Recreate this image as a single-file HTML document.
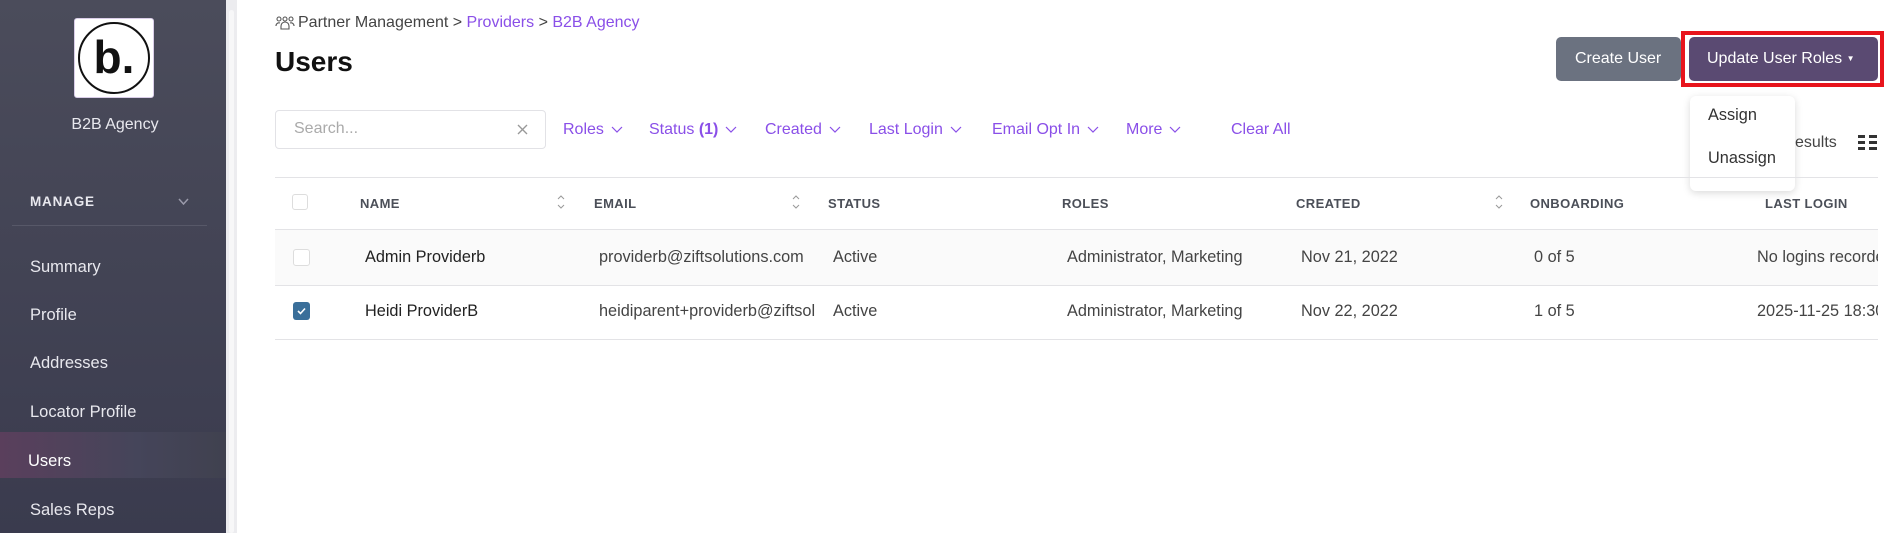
<!DOCTYPE html>
<html><head><meta charset="utf-8"><style>
*{box-sizing:border-box;margin:0;padding:0}
body{width:1893px;height:533px;overflow:hidden;background:#fff;font-family:"Liberation Sans",Arial,sans-serif;position:relative;color:#333}
.sb{position:absolute;left:0;top:0;width:226px;height:533px;background:linear-gradient(#4b4c5b,#3a3b4e)}
.strip{position:absolute;left:226px;top:0;width:11px;height:533px;background:#ececef}
.strip i{position:absolute;left:3px;top:10px;width:5px;height:523px;background:#f7f7f8;border-radius:3px}
.logo{position:absolute;left:74px;top:18px;width:80px;height:80px;background:#fff;border-radius:3px;border:1px solid #d9cde8}
.logo div{position:absolute;left:3px;top:3px;width:72px;height:72px;border:2px solid #111;border-radius:50%;text-align:center;font:bold 46px/66px "Liberation Sans",sans-serif;color:#111}
.s{position:absolute;color:#e8e8ee;font-size:16.5px}
.a{position:absolute;white-space:nowrap}
.p{color:#8a4fe8}
.f{position:absolute;top:121px;font-size:16px;color:#8a4fe8;white-space:nowrap}
.f svg{margin-left:7px;vertical-align:middle}
.h{position:absolute;top:196px;font-size:13px;font-weight:bold;color:#4b4f58;letter-spacing:.4px}
.c{position:absolute;font-size:16.3px;color:#444;white-space:nowrap}
.sort{position:absolute;top:193px}
.ln{position:absolute;left:275px;width:1603px;height:1px;background:#e3e3e6}
</style></head><body>
<div class="sb">
 <div class="logo"><div>b.</div></div>
 <div class="s" style="left:60px;top:116px;width:110px;text-align:center;font-size:16px">B2B Agency</div>
 <div class="s" style="left:30px;top:194px;font-size:13.5px;font-weight:bold;letter-spacing:.8px">MANAGE</div>
 <svg style="position:absolute;left:178px;top:198px" width="11" height="8"><path d="M1 1l4.5 5 4.5-5" stroke="#9a9aaa" stroke-width="1.5" fill="none"/></svg>
 <div style="position:absolute;left:12px;top:225px;width:195px;height:1px;background:#575868"></div>
 <div class="s" style="left:30px;top:258px">Summary</div>
 <div class="s" style="left:30px;top:306px">Profile</div>
 <div class="s" style="left:30px;top:354px">Addresses</div>
 <div class="s" style="left:30px;top:403px">Locator Profile</div>
 <div style="position:absolute;left:0;top:432px;width:226px;height:46px;background:linear-gradient(90deg,#5a3f5c,#45455a 60%,#40414f)"></div>
 <div class="s" style="left:28px;top:452px;color:#fff">Users</div>
 <div class="s" style="left:30px;top:501px">Sales Reps</div>
</div>
<div class="strip"><i></i></div>
<svg style="position:absolute;left:275px;top:16px" width="20" height="14" fill="none" stroke="#555" stroke-width="1.1"><circle cx="4" cy="3" r="2"/><circle cx="10" cy="3" r="2"/><circle cx="16" cy="3" r="2"/><path d="M6 13v-3a4 4 0 0 1 8 0v3zM1 10a3 3 0 0 1 4-3M19 10a3 3 0 0 0-4-3"/></svg>
<div class="a" style="left:298px;top:14px;font-size:16px;color:#444">Partner Management &gt; <span class="p">Providers</span> &gt; <span class="p">B2B Agency</span></div>
<div class="a" style="left:275px;top:46px;font-size:28px;font-weight:bold;color:#111">Users</div>
<div style="position:absolute;left:275px;top:110px;width:271px;height:39px;border:1px solid #e2e2e6;border-radius:4px"></div>
<div class="a" style="left:294px;top:120px;font-size:16px;color:#aaa">Search...</div>
<svg style="position:absolute;left:517px;top:124px" width="11" height="11"><path d="M1 1l9 9M10 1l-9 9" stroke="#999" stroke-width="1.4"/></svg>
<div class="f" style="left:563px">Roles<svg width="12" height="8"><path d="M1 1l5 5 5-5" stroke="#8a4fe8" stroke-width="1.2" fill="none"/></svg></div>
<div class="f" style="left:649px">Status <b>(1)</b><svg width="12" height="8"><path d="M1 1l5 5 5-5" stroke="#8a4fe8" stroke-width="1.2" fill="none"/></svg></div>
<div class="f" style="left:765px">Created<svg width="12" height="8"><path d="M1 1l5 5 5-5" stroke="#8a4fe8" stroke-width="1.2" fill="none"/></svg></div>
<div class="f" style="left:869px">Last Login<svg width="12" height="8"><path d="M1 1l5 5 5-5" stroke="#8a4fe8" stroke-width="1.2" fill="none"/></svg></div>
<div class="f" style="left:992px">Email Opt In<svg width="12" height="8"><path d="M1 1l5 5 5-5" stroke="#8a4fe8" stroke-width="1.2" fill="none"/></svg></div>
<div class="f" style="left:1126px">More<svg width="12" height="8"><path d="M1 1l5 5 5-5" stroke="#8a4fe8" stroke-width="1.2" fill="none"/></svg></div>
<div class="f" style="left:1231px">Clear All</div>
<div class="a" style="left:1795px;top:134px;font-size:16px;color:#444">esults</div>
<div style="position:absolute;left:1858px;top:135px;width:19px;height:16px;background:repeating-linear-gradient(#333 0 3px,transparent 3px 6px);"><div style="position:absolute;left:7px;top:0;width:4px;height:16px;background:#fff"></div></div>
<div style="position:absolute;left:1556px;top:37px;width:125px;height:44px;background:#6b7280;border-radius:5px;color:#fff;font-size:16px;line-height:44px;padding-left:19px">Create User</div>
<div style="position:absolute;left:1681px;top:31px;width:203px;height:56px;border:4px solid #e8141c"></div>
<div style="position:absolute;left:1689px;top:37px;width:189px;height:44px;background:#5a4a72;border-radius:5px;color:#fff;font-size:16px;line-height:44px;padding-left:18px;white-space:nowrap">Update User Roles <span style="font-size:8px;vertical-align:2px">&#9660;</span></div>
<div style="position:absolute;left:1690px;top:96px;width:105px;height:95px;background:#fff;border-radius:6px;box-shadow:0 2px 8px rgba(0,0,0,.15)"></div>
<div class="c" style="left:1708px;top:106px;color:#333">Assign</div>
<div class="c" style="left:1708px;top:149px;color:#333">Unassign</div>
<div class="ln" style="top:177px"></div>
<div style="position:absolute;left:292px;top:194px;width:16px;height:16px;border:1px solid #ddd;border-radius:3px"></div>
<svg class="sort" style="left:556px" width="10" height="18"><path d="M2 6l3-3 3 3M2 12l3 3 3-3" stroke="#999" fill="none"/></svg>
<svg class="sort" style="left:791px" width="10" height="18"><path d="M2 6l3-3 3 3M2 12l3 3 3-3" stroke="#999" fill="none"/></svg>
<svg class="sort" style="left:1494px" width="10" height="18"><path d="M2 6l3-3 3 3M2 12l3 3 3-3" stroke="#999" fill="none"/></svg>
<div class="h" style="left:360px">NAME</div>
<div class="h" style="left:594px">EMAIL</div>
<div class="h" style="left:828px">STATUS</div>
<div class="h" style="left:1062px">ROLES</div>
<div class="h" style="left:1296px">CREATED</div>
<div class="h" style="left:1530px">ONBOARDING</div>
<div class="h" style="left:1765px">LAST LOGIN</div>
<div class="ln" style="top:229px"></div>
<div style="position:absolute;left:275px;top:230px;width:1603px;height:55px;background:#fafafa"></div>
<div class="ln" style="top:285px"></div>
<div class="ln" style="top:339px"></div>
<div style="position:absolute;left:293px;top:249px;width:17px;height:17px;border:1px solid #ddd;border-radius:3px;background:#fff"></div>
<div style="position:absolute;left:293px;top:302px;width:17px;height:18px;border-radius:3px;background:#3a6f9a"><svg width="17" height="18"><path d="M5 9l2.5 2.5L12 6.5" stroke="#fff" stroke-width="1.6" fill="none"/></svg></div>
<div class="c" style="left:365px;top:248px;color:#222">Admin Providerb</div>
<div class="c" style="left:599px;top:248px">providerb@ziftsolutions.com</div>
<div class="c" style="left:833px;top:248px">Active</div>
<div class="c" style="left:1067px;top:248px">Administrator, Marketing</div>
<div class="c" style="left:1301px;top:248px">Nov 21, 2022</div>
<div class="c" style="left:1534px;top:248px">0 of 5</div>
<div class="c" style="left:1757px;top:248px;width:121px;overflow:hidden">No logins recorded</div>
<div class="c" style="left:365px;top:302px;color:#222">Heidi ProviderB</div>
<div class="c" style="left:599px;top:302px;width:216px;overflow:hidden">heidiparent+providerb@ziftsolutions.com</div>
<div class="c" style="left:833px;top:302px">Active</div>
<div class="c" style="left:1067px;top:302px">Administrator, Marketing</div>
<div class="c" style="left:1301px;top:302px">Nov 22, 2022</div>
<div class="c" style="left:1534px;top:302px">1 of 5</div>
<div class="c" style="left:1757px;top:302px;width:121px;overflow:hidden">2025-11-25 18:30</div>
</body></html>
